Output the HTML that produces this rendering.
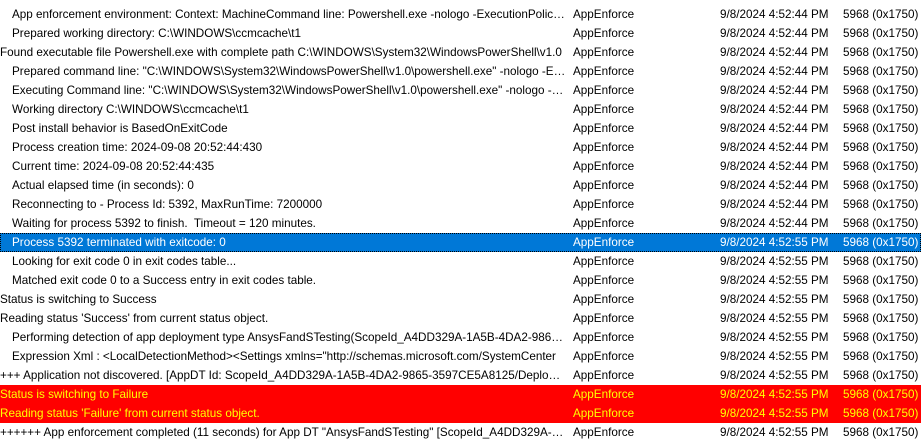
<!DOCTYPE html>
<html><head><meta charset="utf-8"><style>
body{margin:0;width:921px;height:447px;background:#fff;overflow:hidden;font-family:"Liberation Sans",sans-serif;font-size:11.7px;color:#000}
.r{position:absolute;left:0;width:921px;height:19px;line-height:19px;white-space:nowrap}
.r span{position:absolute;top:0;overflow:hidden}
.t{left:0;width:566px;text-overflow:ellipsis}
.t.i{padding-left:12px;width:554px}
.c{left:573px}.d{left:720px}.h{left:843px}
.sel{background:#0078d7;color:#fff;outline:1px dotted #000;outline-offset:-1px}
.red{background:#f00;color:#ff0}
</style></head><body>
<div class="r" style="top:5px"><span class="t i">App enforcement environment:  Context: MachineCommand line: Powershell.exe -nologo -ExecutionPolicy Bypass</span><span class="c">AppEnforce</span><span class="d">9/8/2024 4:52:44 PM</span><span class="h">5968 (0x1750)</span></div>
<div class="r" style="top:24px"><span class="t i">Prepared working directory: C:\WINDOWS\ccmcache\t1</span><span class="c">AppEnforce</span><span class="d">9/8/2024 4:52:44 PM</span><span class="h">5968 (0x1750)</span></div>
<div class="r" style="top:43px"><span class="t">Found executable file Powershell.exe with complete path C:\WINDOWS\System32\WindowsPowerShell\v1.0</span><span class="c">AppEnforce</span><span class="d">9/8/2024 4:52:44 PM</span><span class="h">5968 (0x1750)</span></div>
<div class="r" style="top:62px"><span class="t i">Prepared command line: "C:\WINDOWS\System32\WindowsPowerShell\v1.0\powershell.exe" -nologo -ExecutionPolicy</span><span class="c">AppEnforce</span><span class="d">9/8/2024 4:52:44 PM</span><span class="h">5968 (0x1750)</span></div>
<div class="r" style="top:81px"><span class="t i">Executing Command line: "C:\WINDOWS\System32\WindowsPowerShell\v1.0\powershell.exe" -nologo -ExecutionPolicy</span><span class="c">AppEnforce</span><span class="d">9/8/2024 4:52:44 PM</span><span class="h">5968 (0x1750)</span></div>
<div class="r" style="top:100px"><span class="t i">Working directory C:\WINDOWS\ccmcache\t1</span><span class="c">AppEnforce</span><span class="d">9/8/2024 4:52:44 PM</span><span class="h">5968 (0x1750)</span></div>
<div class="r" style="top:119px"><span class="t i">Post install behavior is BasedOnExitCode</span><span class="c">AppEnforce</span><span class="d">9/8/2024 4:52:44 PM</span><span class="h">5968 (0x1750)</span></div>
<div class="r" style="top:138px"><span class="t i">Process creation time: 2024-09-08 20:52:44:430</span><span class="c">AppEnforce</span><span class="d">9/8/2024 4:52:44 PM</span><span class="h">5968 (0x1750)</span></div>
<div class="r" style="top:157px"><span class="t i">Current time: 2024-09-08 20:52:44:435</span><span class="c">AppEnforce</span><span class="d">9/8/2024 4:52:44 PM</span><span class="h">5968 (0x1750)</span></div>
<div class="r" style="top:176px"><span class="t i">Actual elapsed time (in seconds): 0</span><span class="c">AppEnforce</span><span class="d">9/8/2024 4:52:44 PM</span><span class="h">5968 (0x1750)</span></div>
<div class="r" style="top:195px"><span class="t i">Reconnecting to - Process Id: 5392, MaxRunTime: 7200000</span><span class="c">AppEnforce</span><span class="d">9/8/2024 4:52:44 PM</span><span class="h">5968 (0x1750)</span></div>
<div class="r" style="top:214px"><span class="t i">Waiting for process 5392 to finish.&nbsp; Timeout = 120 minutes.</span><span class="c">AppEnforce</span><span class="d">9/8/2024 4:52:44 PM</span><span class="h">5968 (0x1750)</span></div>
<div class="r sel" style="top:233px"><span class="t i">Process 5392 terminated with exitcode: 0</span><span class="c">AppEnforce</span><span class="d">9/8/2024 4:52:55 PM</span><span class="h">5968 (0x1750)</span></div>
<div class="r" style="top:252px"><span class="t i">Looking for exit code 0 in exit codes table...</span><span class="c">AppEnforce</span><span class="d">9/8/2024 4:52:55 PM</span><span class="h">5968 (0x1750)</span></div>
<div class="r" style="top:271px"><span class="t i">Matched exit code 0 to a Success entry in exit codes table.</span><span class="c">AppEnforce</span><span class="d">9/8/2024 4:52:55 PM</span><span class="h">5968 (0x1750)</span></div>
<div class="r" style="top:290px"><span class="t">Status is switching to Success</span><span class="c">AppEnforce</span><span class="d">9/8/2024 4:52:55 PM</span><span class="h">5968 (0x1750)</span></div>
<div class="r" style="top:309px"><span class="t">Reading status 'Success' from current status object.</span><span class="c">AppEnforce</span><span class="d">9/8/2024 4:52:55 PM</span><span class="h">5968 (0x1750)</span></div>
<div class="r" style="top:328px"><span class="t i">Performing detection of app deployment type AnsysFandSTesting(ScopeId_A4DD329A-1A5B-4DA2-9865-3597CE5A8125</span><span class="c">AppEnforce</span><span class="d">9/8/2024 4:52:55 PM</span><span class="h">5968 (0x1750)</span></div>
<div class="r" style="top:347px"><span class="t i">Expression Xml : &lt;LocalDetectionMethod&gt;&lt;Settings xmlns="http://schemas.microsoft.com/SystemCenter</span><span class="c">AppEnforce</span><span class="d">9/8/2024 4:52:55 PM</span><span class="h">5968 (0x1750)</span></div>
<div class="r" style="top:366px"><span class="t">+++ Application not discovered. [AppDT Id: ScopeId_A4DD329A-1A5B-4DA2-9865-3597CE5A8125/DeploymentType</span><span class="c">AppEnforce</span><span class="d">9/8/2024 4:52:55 PM</span><span class="h">5968 (0x1750)</span></div>
<div class="r red" style="top:385px"><span class="t">Status is switching to Failure</span><span class="c">AppEnforce</span><span class="d">9/8/2024 4:52:55 PM</span><span class="h">5968 (0x1750)</span></div>
<div class="r red" style="top:404px"><span class="t">Reading status 'Failure' from current status object.</span><span class="c">AppEnforce</span><span class="d">9/8/2024 4:52:55 PM</span><span class="h">5968 (0x1750)</span></div>
<div class="r" style="top:423px"><span class="t">++++++ App enforcement completed (11 seconds) for App DT "AnsysFandSTesting" [ScopeId_A4DD329A-1A5B-4DA2</span><span class="c">AppEnforce</span><span class="d">9/8/2024 4:52:55 PM</span><span class="h">5968 (0x1750)</span></div>
</body></html>
